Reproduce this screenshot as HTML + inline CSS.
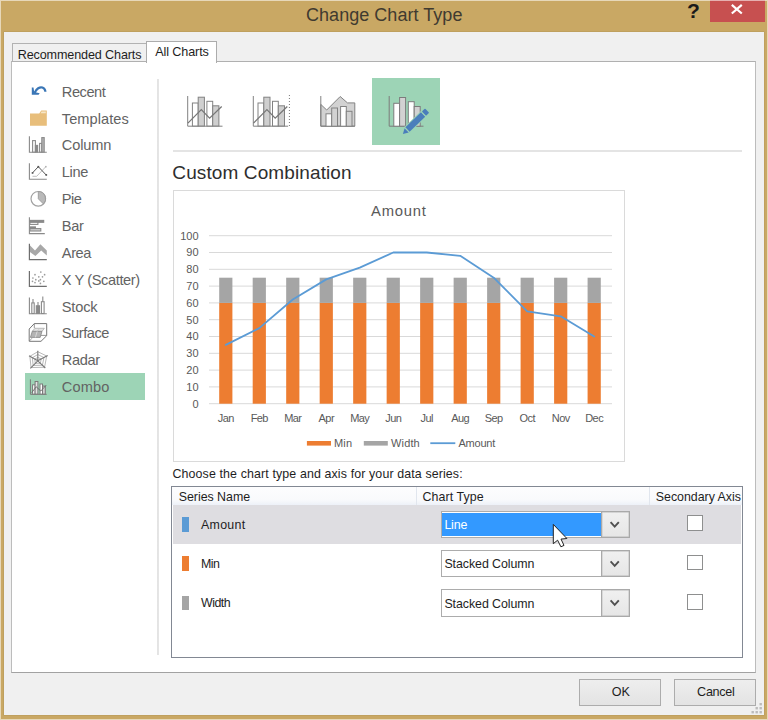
<!DOCTYPE html>
<html lang="en"><head><meta charset="utf-8"><title>Change Chart Type</title>
<style>
html,body{margin:0;padding:0;}
body{width:768px;height:720px;overflow:hidden;position:relative;background:#c9a864;font-family:"Liberation Sans",sans-serif;}
.a{position:absolute;box-sizing:border-box;}
.t{position:absolute;white-space:nowrap;line-height:1;font-family:"Liberation Sans",sans-serif;}
svg{position:absolute;left:0;top:0;overflow:visible;}
svg text{font-family:"Liberation Sans",sans-serif;}

</style></head>
<body>
<!-- window frame -->
<div class="a" style="left:0;top:0;width:768px;height:720px;background:#c9a864;"></div>
<!-- client area -->
<div class="a" style="left:4px;top:32px;width:760px;height:683px;background:#f0f0f0;box-shadow:0 0 0 0.6px #b89c5c;"></div>
<!-- close button -->
<div class="a" style="left:710px;top:0px;width:55px;height:22px;background:#c75050;"></div>
<!-- light outer edge -->
<div class="a" style="left:0;top:0;width:768px;height:720px;border:1px solid rgba(255,255,255,0.55);"></div>
<!-- tab panel -->
<div class="a" style="left:11px;top:61px;width:745px;height:612px;background:#ffffff;border:1px solid #bcbcbc;border-bottom-color:#a2a2a2;border-top-color:#b0b0b0;"></div>
<!-- tabs -->
<div class="a" style="left:12px;top:43px;width:135px;height:18px;background:#f0f0f0;border:1px solid #b2b2b2;border-bottom:none;"></div>
<div class="a" style="left:146px;top:41px;width:71px;height:22px;background:#ffffff;border:1px solid #acacac;border-bottom:none;"></div>
<!-- sidebar separator -->
<div class="a" style="left:157px;top:79px;width:2px;height:576px;background:linear-gradient(90deg,#ededed 0%,#dedede 40%,#dedede 60%,#f1f1f1 100%);"></div>
<!-- sidebar selection -->
<div class="a" style="left:25.2px;top:373.3px;width:119.8px;height:26.9px;background:#9dd4b6;"></div>
<!-- top icon selection -->
<div class="a" style="left:372.3px;top:78px;width:67.3px;height:66.6px;background:#9dd4b6;"></div>
<!-- separator under icons -->
<div class="a" style="left:173px;top:150px;width:569px;height:2px;background:linear-gradient(#ececec,#dcdcdc 50%,#ececec);"></div>
<!-- chart preview box -->
<div class="a" style="left:172.6px;top:190px;width:452.8px;height:271.5px;background:#fff;border:1px solid #dadada;"></div>
<!-- series table -->
<div class="a" style="left:171px;top:486px;width:572px;height:172px;background:#fff;border:1px solid #828893;"></div>
<div class="a" style="left:172px;top:487px;width:570px;height:18px;background:linear-gradient(#fdfdfe 0%,#f9fafc 70%,#edf1f8 100%);"></div>
<div class="a" style="left:416px;top:487px;width:1px;height:18px;background:#e1e6ee;"></div>
<div class="a" style="left:649px;top:487px;width:1px;height:18px;background:#e1e6ee;"></div>
<div class="a" style="left:173px;top:505px;width:568px;height:39px;background:#dedde1;"></div>
<!-- series swatches -->
<div class="a" style="left:182.4px;top:517.2px;width:6.8px;height:14.4px;background:#5b9bd5;"></div>
<div class="a" style="left:182.4px;top:556.3px;width:6.8px;height:14.4px;background:#ed7d31;"></div>
<div class="a" style="left:182.4px;top:595.8px;width:6.8px;height:14.4px;background:#a5a5a5;"></div>
<!-- combos -->
<div class="a" style="left:440.6px;top:511px;width:189px;height:27px;background:#fff;border:1px solid #acacac;"></div>
<div class="a" style="left:442px;top:512.6px;width:159px;height:23.4px;background:#3399ff;"></div>
<div class="a" style="left:601px;top:511px;width:28.6px;height:27px;background:linear-gradient(#f0f0f0,#e6e6e6);border:1px solid #a9a9a9;box-shadow:inset 0 0 0 0.4px #b8b8b8;"></div>
<div class="a" style="left:440.6px;top:550.3px;width:189px;height:27.2px;background:#fff;border:1px solid #acacac;"></div>
<div class="a" style="left:601px;top:550.3px;width:28.6px;height:27.2px;background:linear-gradient(#f0f0f0,#e6e6e6);border:1px solid #a9a9a9;box-shadow:inset 0 0 0 0.4px #b8b8b8;"></div>
<div class="a" style="left:440.6px;top:589.4px;width:189px;height:27.2px;background:#fff;border:1px solid #acacac;"></div>
<div class="a" style="left:601px;top:589.4px;width:28.6px;height:27.2px;background:linear-gradient(#f0f0f0,#e6e6e6);border:1px solid #a9a9a9;box-shadow:inset 0 0 0 0.4px #b8b8b8;"></div>
<!-- checkboxes -->
<div class="a" style="left:687px;top:515.3px;width:16px;height:15.8px;background:#fff;border:1.3px solid #8e8f8f;"></div>
<div class="a" style="left:687px;top:554.8px;width:16px;height:15.6px;background:#fff;border:1.3px solid #8e8f8f;"></div>
<div class="a" style="left:687px;top:594.1px;width:16px;height:15.6px;background:#fff;border:1.3px solid #8e8f8f;"></div>
<!-- buttons -->
<div class="a" style="left:579px;top:679px;width:82.4px;height:26.6px;background:linear-gradient(#eeeeee,#e3e3e3);border:1px solid #acacac;"></div>
<div class="a" style="left:674px;top:679px;width:82.4px;height:26.6px;background:linear-gradient(#eeeeee,#e3e3e3);border:1px solid #acacac;"></div>
<svg width="768" height="720" viewBox="0 0 768 720">
<g stroke="#fff" stroke-width="2.2" stroke-linecap="butt"><path d="M731.8 4.9 L741.8 13.5 M741.8 4.9 L731.8 13.5"/></g>
<g stroke="#d9d9d9" stroke-width="1">
<path d="M209.0 403.70 H612.0"/>
<path d="M209.0 386.90 H612.0"/>
<path d="M209.0 370.10 H612.0"/>
<path d="M209.0 353.30 H612.0"/>
<path d="M209.0 336.50 H612.0"/>
<path d="M209.0 319.70 H612.0"/>
<path d="M209.0 302.90 H612.0"/>
<path d="M209.0 286.10 H612.0"/>
<path d="M209.0 269.30 H612.0"/>
<path d="M209.0 252.50 H612.0"/>
<path d="M209.0 235.70 H612.0"/>
</g>
<g font-size="11" fill="#595959" text-anchor="end">
<text x="198.6" y="407.60">0</text>
<text x="198.6" y="390.80">10</text>
<text x="198.6" y="374.00">20</text>
<text x="198.6" y="357.20">30</text>
<text x="198.6" y="340.40">40</text>
<text x="198.6" y="323.60">50</text>
<text x="198.6" y="306.80">60</text>
<text x="198.6" y="290.00">70</text>
<text x="198.6" y="273.20">80</text>
<text x="198.6" y="256.40">90</text>
<text x="198.6" y="239.60">100</text>
</g>
<g>
<rect x="219.20" y="302.90" width="13.2" height="100.80" fill="#ed7d31"/>
<rect x="219.20" y="277.70" width="13.2" height="25.20" fill="#a5a5a5"/>
<rect x="252.69" y="302.90" width="13.2" height="100.80" fill="#ed7d31"/>
<rect x="252.69" y="277.70" width="13.2" height="25.20" fill="#a5a5a5"/>
<rect x="286.18" y="302.90" width="13.2" height="100.80" fill="#ed7d31"/>
<rect x="286.18" y="277.70" width="13.2" height="25.20" fill="#a5a5a5"/>
<rect x="319.67" y="302.90" width="13.2" height="100.80" fill="#ed7d31"/>
<rect x="319.67" y="277.70" width="13.2" height="25.20" fill="#a5a5a5"/>
<rect x="353.16" y="302.90" width="13.2" height="100.80" fill="#ed7d31"/>
<rect x="353.16" y="277.70" width="13.2" height="25.20" fill="#a5a5a5"/>
<rect x="386.65" y="302.90" width="13.2" height="100.80" fill="#ed7d31"/>
<rect x="386.65" y="277.70" width="13.2" height="25.20" fill="#a5a5a5"/>
<rect x="420.14" y="302.90" width="13.2" height="100.80" fill="#ed7d31"/>
<rect x="420.14" y="277.70" width="13.2" height="25.20" fill="#a5a5a5"/>
<rect x="453.63" y="302.90" width="13.2" height="100.80" fill="#ed7d31"/>
<rect x="453.63" y="277.70" width="13.2" height="25.20" fill="#a5a5a5"/>
<rect x="487.12" y="302.90" width="13.2" height="100.80" fill="#ed7d31"/>
<rect x="487.12" y="277.70" width="13.2" height="25.20" fill="#a5a5a5"/>
<rect x="520.61" y="302.90" width="13.2" height="100.80" fill="#ed7d31"/>
<rect x="520.61" y="277.70" width="13.2" height="25.20" fill="#a5a5a5"/>
<rect x="554.10" y="302.90" width="13.2" height="100.80" fill="#ed7d31"/>
<rect x="554.10" y="277.70" width="13.2" height="25.20" fill="#a5a5a5"/>
<rect x="587.59" y="302.90" width="13.2" height="100.80" fill="#ed7d31"/>
<rect x="587.59" y="277.70" width="13.2" height="25.20" fill="#a5a5a5"/>
</g>
<polyline points="225.80,344.90 259.29,328.10 292.78,299.54 326.27,279.38 359.76,267.62 393.25,252.50 426.74,252.50 460.23,255.86 493.72,277.70 527.21,311.30 560.70,316.34 594.19,336.50" fill="none" stroke="#5b9bd5" stroke-width="1.8" stroke-linejoin="round" stroke-linecap="round"/>
<g font-size="11" fill="#595959" text-anchor="middle" letter-spacing="-0.55">
<text x="225.80" y="421.6">Jan</text>
<text x="259.29" y="421.6">Feb</text>
<text x="292.78" y="421.6">Mar</text>
<text x="326.27" y="421.6">Apr</text>
<text x="359.76" y="421.6">May</text>
<text x="393.25" y="421.6">Jun</text>
<text x="426.74" y="421.6">Jul</text>
<text x="460.23" y="421.6">Aug</text>
<text x="493.72" y="421.6">Sep</text>
<text x="527.21" y="421.6">Oct</text>
<text x="560.70" y="421.6">Nov</text>
<text x="594.19" y="421.6">Dec</text>
</g>
<text x="398.8" y="215.6" font-size="14.8" fill="#595959" text-anchor="middle" letter-spacing="0.75">Amount</text>
<rect x="306.9" y="441" width="24.1" height="4.6" fill="#ed7d31"/>
<rect x="363.8" y="441" width="24" height="4.6" fill="#a5a5a5"/>
<path d="M430.3 443.2 H455.3" stroke="#5b9bd5" stroke-width="1.8"/>
<g font-size="11" fill="#595959" letter-spacing="-0.2"><text x="334" y="447" letter-spacing="0.2">Min</text><text x="391" y="447" letter-spacing="0.15">Width</text><text x="458.4" y="447">Amount</text></g>
<path d="M610.6 522.1 L614.7 526.6 L618.8 522.1" fill="none" stroke="#505050" stroke-width="1.9"/>
<path d="M610.6 561.3 L614.7 565.8 L618.8 561.3" fill="none" stroke="#505050" stroke-width="1.9"/>
<path d="M610.6 600.4 L614.7 604.9 L618.8 600.4" fill="none" stroke="#505050" stroke-width="1.9"/>
<path d="M553.3 524.4 L553.3 543.7 L557.6 540.2 L560.9 546.8 L564 545.4 L561 539.1 L566.9 538.5 Z" fill="#fff" stroke="#222" stroke-width="1" stroke-linejoin="miter"/>
<g fill="#bcbcbc">
<rect x="759.5" y="703" width="2.4" height="2.4"/>
<rect x="759.5" y="707" width="2.4" height="2.4"/>
<rect x="759.5" y="711" width="2.4" height="2.4"/>
<rect x="755.5" y="707" width="2.4" height="2.4"/>
<rect x="755.5" y="711" width="2.4" height="2.4"/>
<rect x="751.5" y="711" width="2.4" height="2.4"/>
</g>
<g><path d="M34.6 92.8 C36.4 88.6 39.8 86.7 42.4 87.5 C44.4 88.2 45.3 89.8 45.4 91.8" fill="none" stroke="#3a76b6" stroke-width="2.2"/><path d="M31.8 87.5 L33.5 87.5 L34.2 92 L39.7 93.3 L38.6 94.7 L31.8 94.7 Z" fill="#3a76b6"/></g>
<path d="M30 113.4 H39.2 L41.2 110.4 H46.8 V125.7 H30 Z" fill="#e8be7b"/>
<path d="M41.6 111.6 H45.8 V113.2 H40.6 Z" fill="#f6e6c8"/>
<g fill="none" stroke="#8a8a8a" stroke-width="1.1"><path d="M29.4 136.2 V152.3 H46.8"/><rect x="32.6" y="140.6" width="2.8" height="11.5" fill="#fff"/><rect x="35.4" y="145.4" width="2.2" height="6.7" fill="#8a8a8a"/><rect x="39.6" y="143.4" width="2.2" height="8.7" fill="#fff"/><rect x="41.8" y="137.6" width="2.4" height="14.5" fill="#b5b5b5"/></g>
<g fill="none" stroke="#8a8a8a" stroke-width="1.1"><path d="M29.4 163.3 V179.2 H46.8"/><path d="M32.5 176.3 H36.7 L45.8 166.7" stroke="#b9b9b9" stroke-width="0.9"/><path d="M32.5 172.9 L38.3 166.7 L46.2 175" stroke="#555" stroke-width="1"/></g>
<g fill="#555"><rect x="31.7" y="172.1" width="1.7" height="1.7"/><rect x="37.5" y="165.9" width="1.7" height="1.7"/><rect x="45.4" y="174.1" width="1.7" height="1.7"/></g>
<g fill="#b5b5b5"><rect x="45" y="165.9" width="1.6" height="1.6"/></g>
<circle cx="38.3" cy="198.8" r="7.3" fill="#fff" stroke="#a2a2a2" stroke-width="1.2"/>
<path d="M38.3 198.8 V191.5 A7.3 7.3 0 0 1 43.46 203.96 Z" fill="#b9b9b9" stroke="#9a9a9a" stroke-width="0.9"/>
<g fill="none" stroke="#8a8a8a" stroke-width="1.1"><path d="M29.4 217.3 V233.6 H44.8"/><rect x="29.9" y="220.4" width="13.8" height="1.9" fill="#8a8a8a"/><rect x="29.9" y="222.3" width="8" height="2.1" fill="#fff"/><rect x="29.9" y="226.9" width="5.5" height="1.7" fill="#8a8a8a"/><rect x="29.9" y="228.6" width="10.9" height="2.4" fill="#d0d0d0"/></g>
<path d="M29.6 245.1 L35 250.5 L40.4 244.3 L46.8 250.5 V255.5 L41.2 250.5 L35.4 255.9 L29.6 251.8 Z" fill="#a8a8a8"/>
<path d="M29.4 243.8 V259.7 H46.8" fill="none" stroke="#6e6e6e" stroke-width="1.2"/>
<path d="M29.4 270.9 V286.3 H46.8" fill="none" stroke="#6e6e6e" stroke-width="1.2"/>
<g fill="#9a9a9a"><circle cx="40.8" cy="272.0" r="0.85"/><circle cx="44.6" cy="274.7" r="0.85"/><circle cx="35.0" cy="274.7" r="0.85"/><circle cx="32.9" cy="278.0" r="0.85"/><circle cx="38.8" cy="276.8" r="0.85"/><circle cx="42.5" cy="276.8" r="0.85"/><circle cx="35.8" cy="279.7" r="0.85"/><circle cx="40.4" cy="279.7" r="0.85"/><circle cx="32.5" cy="281.3" r="0.85"/><circle cx="35.0" cy="282.6" r="0.85"/><circle cx="38.8" cy="280.9" r="0.85"/><circle cx="43.8" cy="281.3" r="0.85"/><circle cx="40.4" cy="283.4" r="0.85"/></g>
<g fill="none" stroke="#8a8a8a" stroke-width="1.1"><path d="M29.4 297.4 V313.7 H46.8"/><path d="M33 299 V303 M38 302 V306 M42.8 296.6 V302"/><rect x="31.8" y="302.9" width="2.4" height="10.6" fill="#fff"/><rect x="36.3" y="305.8" width="3.2" height="7.7" fill="#8a8a8a"/><rect x="41.4" y="301.7" width="2.7" height="11.8" fill="#fff"/></g>
<g fill="none" stroke="#777" stroke-width="1" stroke-linejoin="round"><path d="M34.3 323.6 V328.3 M40.4 335.4 H46.6" stroke="#8a8a8a" stroke-width="0.9"/><path d="M35 328.3 H44.3 L42 331.3 H32.3 Z" fill="#fbfbfb" stroke="#999" stroke-width="0.7"/><path d="M39.7 328.3 L37.2 331.3 M33.7 329.8 H43.2" stroke="#c4c4c4" stroke-width="0.6"/><path d="M32.3 331.3 H42 L40.2 337.4 H30.4 Z" fill="#b4b4b4" stroke="#868686" stroke-width="0.8"/><path d="M37.2 331.3 L35.4 337.4" stroke="#e2e2e2" stroke-width="0.8"/><path d="M29.4 341 L32 338.2" stroke="#8a8a8a" stroke-width="0.8"/><path d="M29.2 329 L34.3 323.6 H46.7 V335.7 L41 341.3 H29.2 Z"/></g>
<g fill="none" stroke="#a6a6a6" stroke-width="0.8">
<path d="M37.80 351.71 L46.71 356.03 L44.55 367.28 L31.05 367.55 L29.88 356.30 Z"/><path d="M37.80 354.54 L43.94 357.51 L42.45 365.26 L33.15 365.45 L32.34 357.70 Z"/><path d="M37.80 357.37 L41.17 359.00 L40.35 363.25 L35.25 363.35 L34.81 359.10 Z"/>
<path d="M37.8 360.8 L37.8 350.7 M37.8 360.8 L47.7 355.5 M37.8 360.8 L45.3 368.0 M37.8 360.8 L30.3 368.3 M37.8 360.8 L29.0 355.8" stroke="#787878" stroke-width="1.1"/>
</g>
<g fill="none" stroke="#7a7a7a" stroke-width="1"><path d="M30.4 379.3 V394.3 H46.7"/><rect x="32.6" y="384.8" width="2.5" height="9.3" fill="#fff"/><rect x="35.1" y="381.5" width="2.8" height="12.6" fill="#e4e4e4"/><rect x="40" y="384" width="2.5" height="10.1" fill="#fff"/><rect x="42.5" y="386.1" width="2.8" height="8" fill="#cfcfcf"/><path d="M31.7 392.7 L36.2 386.8 L40.8 391 L46.2 385.2" stroke="#6a6a6a" stroke-width="0.9"/></g>
<g transform="translate(0,0)" fill="none" stroke="#828282" stroke-width="1"><path d="M187.7 96 V126.2 H222.5"/><rect x="192.4" y="103" width="5.8" height="23" fill="#fff"/><rect x="198.2" y="97.2" width="6.2" height="28.8" fill="#cfcfcf"/><rect x="206.9" y="101.3" width="5.8" height="24.7" fill="#fff"/><rect x="212.7" y="105.8" width="6.2" height="20.2" fill="#cfcfcf"/><path d="M187.9 123.1 L201.3 109.6 L209.6 118.2 L221.7 106.5" stroke="#777" stroke-width="1.25"/></g>
<g transform="translate(65.6,0)" fill="none" stroke="#828282" stroke-width="1"><path d="M187.7 96 V126.2 H222.5"/><rect x="192.4" y="103" width="5.8" height="23" fill="#fff"/><rect x="198.2" y="97.2" width="6.2" height="28.8" fill="#cfcfcf"/><rect x="206.9" y="101.3" width="5.8" height="24.7" fill="#fff"/><rect x="212.7" y="105.8" width="6.2" height="20.2" fill="#cfcfcf"/><path d="M187.9 123.1 L201.3 109.6 L209.6 118.2 L221.7 106.5" stroke="#777" stroke-width="1.25"/><path d="M223.8 95 V126.4" stroke="#777" stroke-width="1" stroke-dasharray="1 2"/></g>
<g fill="none" stroke="#828282" stroke-width="1"><path d="M320.8 104.4 L326.7 110 L340.2 96.5 L347.5 102.9 H354.8 V126.2 H320.8 Z" fill="#d2d2d2"/><path d="M320.8 96 V126.2 H354.8"/><rect x="326" y="113.8" width="5.7" height="12.4" fill="#fff"/><rect x="331.7" y="108" width="5.8" height="18.2" fill="#d2d2d2"/><rect x="340.6" y="106.5" width="5.7" height="19.7" fill="#fff"/><rect x="346.3" y="111.3" width="5.7" height="14.9" fill="#d2d2d2"/></g>
<g fill="none" stroke="#7c7c7c" stroke-width="1"><path d="M389.2 96 V126.2 H423.5"/><rect x="393.8" y="103.3" width="5.8" height="22.9" fill="#fff"/><rect x="399.6" y="97.5" width="6" height="28.7" fill="#d2d2d2"/><rect x="408.3" y="101.7" width="5.9" height="24.5" fill="#fff"/><rect x="414.2" y="106.5" width="6" height="19.7" fill="#d2d2d2"/></g>
<g transform="translate(402.9,133.9) rotate(-43.9)" fill="#4a7ebb" stroke="#9dd4b6" stroke-width="1.8" paint-order="stroke"><path d="M0 0 L5.2 -3 V3 Z"/><rect x="6.4" y="-3.05" width="21.6" height="6.1"/><rect x="29.2" y="-3.05" width="4.4" height="6.1" rx="0.8"/></g>
</svg>

<span class="t" id="t0" style="left:306.00px;top:5.76px;font-size:18px;color:#403a30;letter-spacing:0.040px;">Change Chart Type</span>
<span class="t" id="t1" style="left:686.90px;top:-0.38px;font-size:21px;color:#1a1a1a;letter-spacing:-0.840px;font-weight:bold;">?</span>
<span class="t" id="t2" style="left:17.70px;top:48.53px;font-size:12.6px;color:#1e1e1e;letter-spacing:-0.127px;">Recommended Charts</span>
<span class="t" id="t3" style="left:155.30px;top:46.23px;font-size:12.6px;color:#1e1e1e;letter-spacing:-0.118px;">All Charts</span>
<span class="t" id="t4" style="left:61.80px;top:84.74px;font-size:14.6px;color:#636363;letter-spacing:-0.447px;">Recent</span>
<span class="t" id="t5" style="left:61.80px;top:111.59px;font-size:14.6px;color:#636363;letter-spacing:0.050px;">Templates</span>
<span class="t" id="t6" style="left:61.80px;top:138.44px;font-size:14.6px;color:#636363;letter-spacing:-0.137px;">Column</span>
<span class="t" id="t7" style="left:61.80px;top:165.29px;font-size:14.6px;color:#636363;letter-spacing:-0.327px;">Line</span>
<span class="t" id="t8" style="left:61.80px;top:192.14px;font-size:14.6px;color:#636363;letter-spacing:-0.490px;">Pie</span>
<span class="t" id="t9" style="left:61.80px;top:218.99px;font-size:14.6px;color:#636363;letter-spacing:-0.302px;">Bar</span>
<span class="t" id="t10" style="left:61.80px;top:245.84px;font-size:14.6px;color:#636363;letter-spacing:-0.405px;">Area</span>
<span class="t" id="t11" style="left:61.80px;top:272.69px;font-size:14.6px;color:#636363;letter-spacing:-0.392px;">X Y (Scatter)</span>
<span class="t" id="t12" style="left:61.80px;top:299.54px;font-size:14.6px;color:#636363;letter-spacing:-0.171px;">Stock</span>
<span class="t" id="t13" style="left:61.80px;top:326.39px;font-size:14.6px;color:#636363;letter-spacing:-0.447px;">Surface</span>
<span class="t" id="t14" style="left:61.80px;top:353.24px;font-size:14.6px;color:#636363;letter-spacing:-0.359px;">Radar</span>
<span class="t" id="t15" style="left:61.80px;top:380.09px;font-size:14.6px;color:#636363;letter-spacing:0.142px;">Combo</span>
<span class="t" id="t16" style="left:172.30px;top:163.12px;font-size:19px;color:#2e2e2e;letter-spacing:0.111px;">Custom Combination</span>
<span class="t" id="t17" style="left:172.50px;top:467.70px;font-size:12.4px;color:#1e1e1e;letter-spacing:0.125px;">Choose the chart type and axis for your data series:</span>
<span class="t" id="t18" style="left:178.70px;top:490.90px;font-size:12.4px;color:#1e1e1e;letter-spacing:-0.021px;">Series Name</span>
<span class="t" id="t19" style="left:422.50px;top:490.90px;font-size:12.4px;color:#1e1e1e;letter-spacing:0.081px;">Chart Type</span>
<span class="t" id="t20" style="left:655.80px;top:490.90px;font-size:12.4px;color:#1e1e1e;letter-spacing:-0.022px;">Secondary Axis</span>
<span class="t" id="t21" style="left:201.00px;top:519.20px;font-size:12.4px;color:#1e1e1e;letter-spacing:0.283px;">Amount</span>
<span class="t" id="t22" style="left:201.00px;top:558.40px;font-size:12.4px;color:#1e1e1e;letter-spacing:-0.496px;">Min</span>
<span class="t" id="t23" style="left:201.00px;top:597.40px;font-size:12.4px;color:#1e1e1e;letter-spacing:-0.496px;">Width</span>
<span class="t" id="t24" style="left:444.40px;top:519.30px;font-size:12.4px;color:#ffffff;letter-spacing:-0.157px;">Line</span>
<span class="t" id="t25" style="left:444.40px;top:558.40px;font-size:12.4px;color:#1e1e1e;letter-spacing:-0.062px;">Stacked Column</span>
<span class="t" id="t26" style="left:444.40px;top:597.50px;font-size:12.4px;color:#1e1e1e;letter-spacing:-0.062px;">Stacked Column</span>
<span class="t" id="t27" style="left:611.80px;top:686.43px;font-size:12.6px;color:#1e1e1e;letter-spacing:-0.069px;">OK</span>
<span class="t" id="t28" style="left:697.10px;top:686.43px;font-size:12.6px;color:#1e1e1e;letter-spacing:-0.294px;">Cancel</span>
</body></html>
